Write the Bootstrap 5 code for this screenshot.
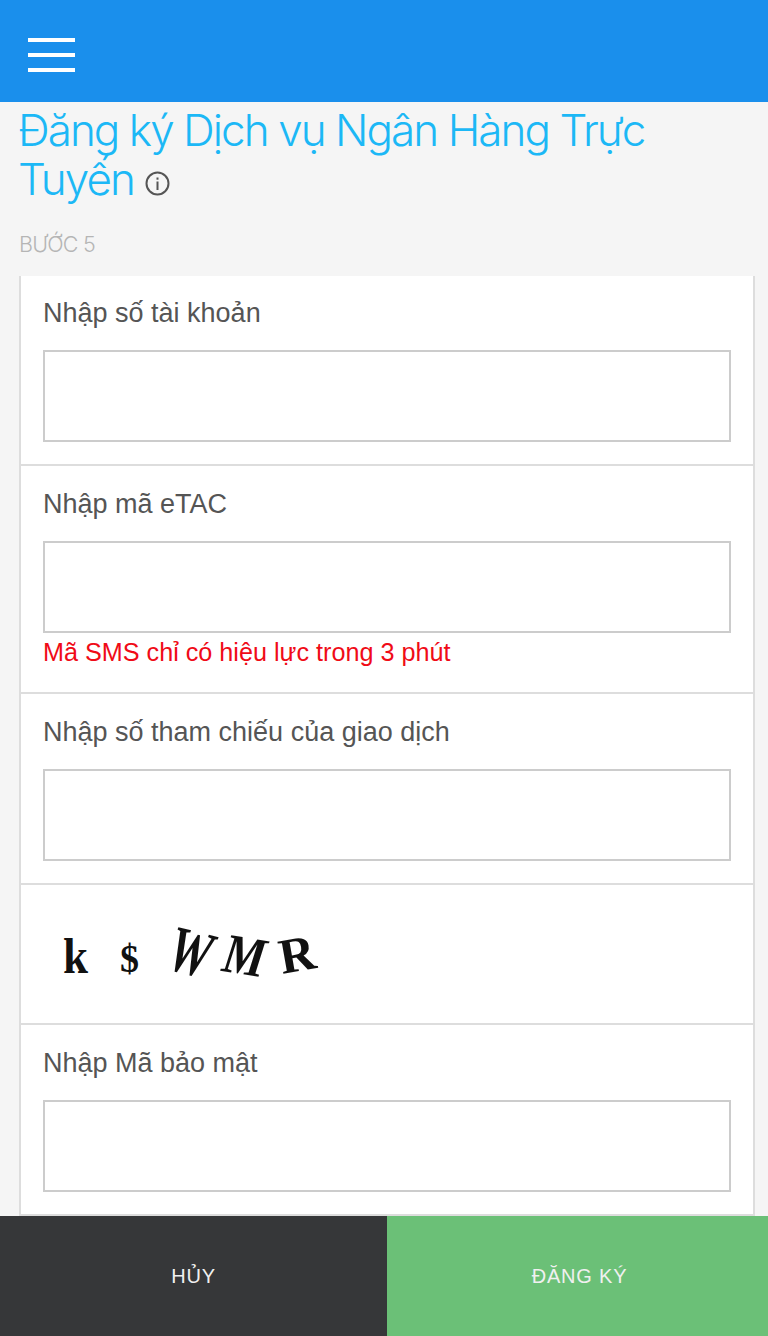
<!DOCTYPE html>
<html lang="vi">
<head>
<meta charset="utf-8">
<title>Đăng ký Dịch vụ Ngân Hàng Trực Tuyến</title>
<link href="https://cdn.jsdelivr.net/npm/bootstrap@5.3.0/dist/css/bootstrap.min.css" rel="stylesheet">
<style>
html,body{height:1336px;overflow:hidden}
body{background:#f5f5f5;font-family:"Liberation Sans",Arial,sans-serif;color:#555}
.topbar{height:102px;background:#1a8fec;padding:38px 0 0 28px}
.burger{width:47px;height:34px;display:flex;flex-direction:column;justify-content:space-between}
.burger i{display:block;height:4px;background:#fff}
.page-title{font-family:Inter,"Liberation Sans",sans-serif;font-weight:300;font-size:44px;line-height:49px;letter-spacing:-1.95px;color:#1cb8f6;margin:4px 0 0;padding:0 19px 0 18px}
.info-ic{width:25px;height:25px;vertical-align:-1px;margin-left:11px}
.step-label{font-family:Inter,"Liberation Sans",sans-serif;font-weight:300;font-size:21.5px;letter-spacing:-.8px;color:#b5b5b5;line-height:24px;margin:28px 0 20px;padding:0 19px}
.form-list{margin:0 13px 0 19px;border:0}
.form-list .list-group-item{border:solid #ddd;border-width:0 2px 2px;padding:0 22px;background:#fff;color:#555;border-radius:0}
.form-list .list-group-item+.list-group-item{margin-top:0}
.fld-label{display:block;font-size:27px;line-height:34px;margin:21px 0 20px}
.form-list .list-group-item:first-child .fld-label{margin-top:20px}
.fld-input{height:92px;border:2px solid #ccc;border-radius:0;margin-bottom:22px;background:#fff}
.fld-note{font-size:25.2px;line-height:30px;color:#f00b17;margin:4px 0 25px}
.fld-input.has-note{margin-bottom:0}
.captcha-row{height:140px}
.captcha{font-family:"Liberation Serif",serif;color:#111;line-height:1;padding:0 0 0 17px;height:100%}
.captcha span{display:inline-block;font-weight:700}
.c1{font-size:50px;width:59px;transform:translateY(2px) scaleX(.9)}
.c2{font-size:40px;width:42px;transform:translateY(5px) scaleX(.95)}
.c3{font-size:66px;width:58px;font-style:italic;transform:translateY(-2px) rotate(14deg) scaleX(.72)}
.c4{font-size:56px;font-style:italic;width:60px;transform:translateY(2px) rotate(9deg) scaleX(.85)}
.c5{font-size:50px;transform:rotate(-10deg)}
.action-bar{height:120px}
.action-bar .btn{border:0;border-radius:0;color:#f0f0f0;font-size:20px;letter-spacing:.8px;font-family:"Liberation Sans",sans-serif;height:120px;padding:0}
.btn-cancel{background:#363739;width:387px}
.action-bar .btn-submit{background:#6bc077;width:381px;padding-left:4px}
</style>
</head>
<body>
<div class="topbar">
  <div class="burger"><i></i><i></i><i></i></div>
</div>
<h1 class="page-title">Đăng ký Dịch vụ Ngân Hàng Trực Tuyến<svg class="info-ic" viewBox="0 0 25 25" fill="none"><circle cx="12.5" cy="12.5" r="11" stroke="#555" stroke-width="2"/><rect x="11.5" y="10.5" width="2" height="8.5" fill="#555"/><rect x="11.5" y="6.5" width="2" height="2.2" fill="#555"/></svg></h1>
<div class="step-label">BƯỚC 5</div>
<div class="list-group form-list">
  <div class="list-group-item">
    <label class="fld-label">Nhập số tài khoản</label>
    <input class="form-control fld-input" type="text">
  </div>
  <div class="list-group-item">
    <label class="fld-label">Nhập mã eTAC</label>
    <input class="form-control fld-input has-note" type="text">
    <div class="fld-note">Mã SMS chỉ có hiệu lực trong 3 phút</div>
  </div>
  <div class="list-group-item">
    <label class="fld-label">Nhập số tham chiếu của giao dịch</label>
    <input class="form-control fld-input" type="text">
  </div>
  <div class="list-group-item captcha-row">
    <div class="captcha d-flex align-items-center"><span class="c1">k</span><span class="c2">$</span><span class="c3">W</span><span class="c4">M</span><span class="c5">R</span></div>
  </div>
  <div class="list-group-item">
    <label class="fld-label">Nhập Mã bảo mật</label>
    <input class="form-control fld-input" type="text">
  </div>
</div>
<div class="d-flex action-bar">
  <button class="btn btn-cancel" type="button">HỦY</button>
  <button class="btn btn-submit" type="button">ĐĂNG KÝ</button>
</div>
<script src="https://cdn.jsdelivr.net/npm/bootstrap@5.3.0/dist/js/bootstrap.bundle.min.js"></script>
</body>
</html>
